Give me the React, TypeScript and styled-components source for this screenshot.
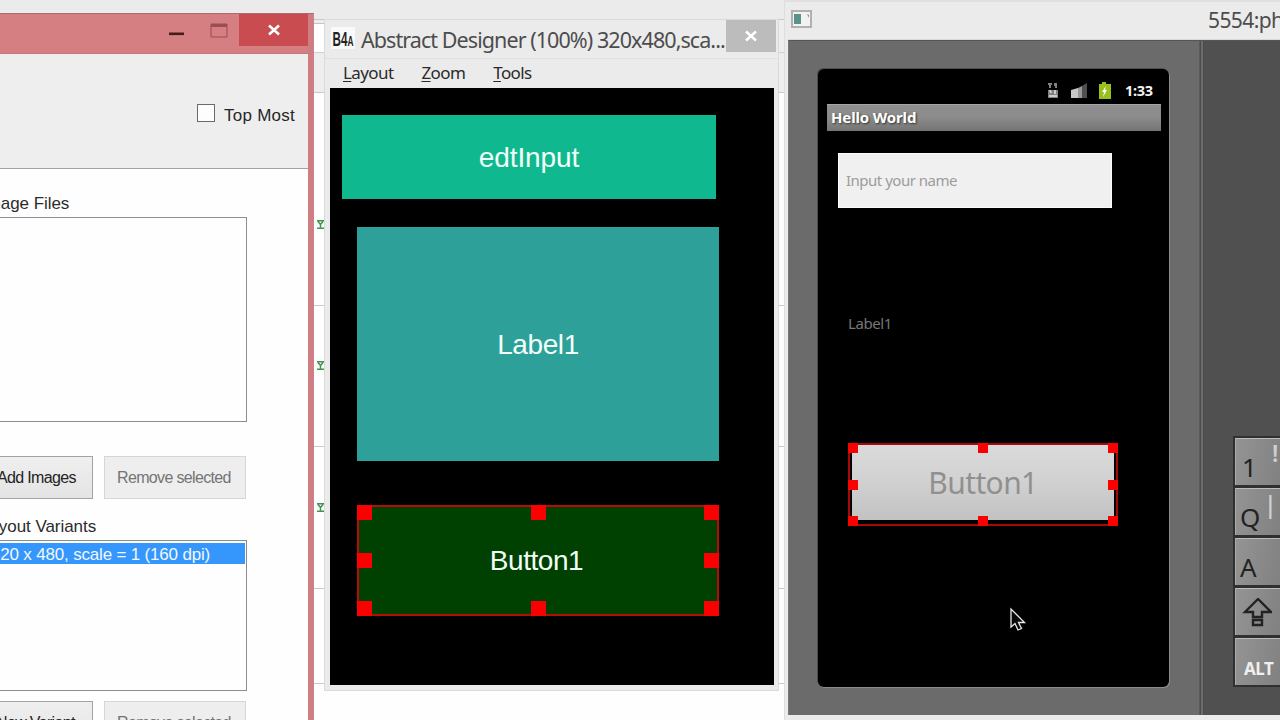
import React from 'react';
import styled, { createGlobalStyle, css } from 'styled-components';

const GlobalStyle = createGlobalStyle`
  * { box-sizing: border-box; }
  body { margin: 0; overflow: hidden; font-family: "Liberation Sans", sans-serif; }
`;

const Desktop = styled.main`
  position: relative;
  width: 1280px;
  height: 720px;
  overflow: hidden;
  background: #fefefe;
`;

/* ---- IDE window in the background ---- */
const Backdrop = styled.div`
  display: flex;
  flex-direction: column;
  height: 720px;
`;
const Band = styled.div<{ $h: number; $bg?: string; $line?: string }>`
  flex: none;
  height: ${p => p.$h}px;
  background: ${p => p.$bg ?? '#fefefe'};
  border-bottom: 1px solid ${p => p.$line ?? '#c9c9c9'};
  display: flex;
  padding-left: 314px;
`;
const Field = styled.div`
  width: 10px;
  margin-top: 3px;
  background: #fff;
  border-top: 1px solid #c4c4c4;
`;
const FoldMark = styled.svg<{ $top: number }>`
  width: 9px;
  height: 9px;
  margin: ${p => p.$top}px 0 0 2px;
`;
const Fold = ({ top }: { top: number }) => (
  <FoldMark $top={top} viewBox="0 0 9 9" fill="none" stroke="#3f9650" strokeWidth="1.5">
    <path d="M1 .8h7M1 8.2h7M2 1.5l2.500 3 2.500-3M4.500 4.500v3.500" />
  </FoldMark>
);

const Window = styled.section<{ $x: number; $y: number; $w: number; $h: number }>`
  position: absolute;
  left: ${p => p.$x}px;
  top: ${p => p.$y}px;
  width: ${p => p.$w}px;
  height: ${p => p.$h}px;
  display: flex;
  flex-direction: column;
`;

/* ---- Designer properties window ---- */
const PropsWindow = styled(Window)`
  background: #cf7d83;
  border-top: 1px solid #ad6a70;
  border-right: 1px solid #c98288;
  padding-right: 5px;
`;
const PropsTitle = styled.header`
  height: 40px;
  flex: none;
  display: flex;
  justify-content: flex-end;
  background: #d67f82;
  border-bottom: 1px solid #bd7b7e;
`;
const Caption = styled.div<{ $w: number; $h: number; $bg?: string }>`
  flex: none;
  width: ${p => p.$w}px;
  height: ${p => p.$h}px;
  background: ${p => p.$bg ?? 'transparent'};
  display: flex;
  align-items: center;
  justify-content: center;
`;
const PropsHeader = styled.div`
  height: 115px;
  flex: none;
  background: #eeeeee;
  border-bottom: 1px solid #a2a2a2;
  display: flex;
  justify-content: flex-end;
  align-items: center;
  padding: 9px 13px 0 0;
`;
const CheckLabel = styled.label`
  display: flex;
  align-items: center;
  gap: 9px;
  font-size: 17px;
  letter-spacing: 0.25px;
  color: #262626;
`;
const CheckBox = styled.span`
  width: 18px;
  height: 18px;
  margin-top: -5px;
  border: 1px solid #6b6b6b;
  background: #fdfdfd;
`;
const PropsBody = styled.div`
  flex: 1;
  background: #fefefe;
  padding: 24px 61px 0 14px;
  overflow: hidden;
`;
const GroupLabel = styled.div<{ $indent: number }>`
  height: 24px;
  line-height: 22px;
  padding-left: ${p => p.$indent}px;
  font-size: 17px;
  letter-spacing: -0.05px;
  color: #2b2b2b;
  white-space: nowrap;
`;
const ListBox = styled.div<{ $h: number }>`
  height: ${p => p.$h}px;
  background: #fefefe;
  border: 1px solid #8b8d93;
  padding: 1px;
`;
const ListItem = styled.div`
  height: 21px;
  margin-top: 1px;
  background: #3597fb;
  color: #f2f8ff;
  font-size: 17px;
  line-height: 24px;
  letter-spacing: -0.18px;
  padding-left: 15px;
  white-space: nowrap;
  overflow: hidden;
`;
const ButtonRow = styled.div<{ $top: number; $bottom: number }>`
  display: flex;
  gap: 11px;
  margin: ${p => p.$top}px 0 ${p => p.$bottom}px 17px;
`;
const PushButton = styled.button<{ $w: number; $pad: number }>`
  width: ${p => p.$w}px;
  height: 43px;
  padding: 1px 0 0 ${p => p.$pad}px;
  text-align: left;
  white-space: nowrap;
  font: 16px "Liberation Sans", sans-serif;
  letter-spacing: -0.65px;
  color: #222;
  background: linear-gradient(#efefef, #e4e4e4);
  border: 1px solid #a3a3a3;
  &:disabled { color: #747474; background: #eeeeee; border-color: #d6d6d6; }
`;

/* ---- Abstract designer window ---- */
const DesignerWindow = styled(Window)`
  background: #ebebeb;
  border: 1px solid #dadada;
`;
const DesignerTitle = styled.header`
  height: 39px;
  flex: none;
  display: flex;
  align-items: flex-start;
  border-bottom: 1px solid #e0e0e0;
  padding-left: 6px;
`;
const TitleText = styled.h1`
  margin: 0;
  width: 371px;
  flex: none;
  font: 400 21.5px/30px "Noto Sans", sans-serif;
  letter-spacing: -0.93px;
  color: #4d4d4d;
  white-space: nowrap;
  padding: 5px 0 0 6px;
`;
const Logo = styled.svg`
  width: 24px;
  height: 24px;
  margin-top: 7px;
  flex: none;
`;
const MenuBar = styled.nav`
  height: 29px;
  flex: none;
  display: flex;
  gap: 28px;
  padding: 1px 0 0 18px;
  font: 17px/26px "Noto Sans", sans-serif;
  letter-spacing: -0.6px;
  color: #2a2a2a;
  u { text-underline-offset: 2px; }
`;
const Canvas = styled.div`
  position: relative;
  flex: none;
  height: 597px;
  margin: 0 4px 0 5px;
  background: #000;
`;
type Box = { $x: number; $y: number; $w: number; $h: number };
const box = css<Box>`
  position: absolute;
  left: ${p => p.$x}px;
  top: ${p => p.$y}px;
  width: ${p => p.$w}px;
  height: ${p => p.$h}px;
`;
const View = styled.div<Box & { $bg: string; $track: number; $selected?: boolean }>`
  ${box}
  display: flex;
  align-items: center;
  justify-content: center;
  background: ${p => p.$bg};
  border: ${p => (p.$selected ? '2px solid #b80d05' : '0')};
  color: #f2fff8;
  font-size: 28px;
  letter-spacing: ${p => p.$track}px;
  padding: ${p => (p.$selected ? '0 3px 0 0' : '1px 0 0')};
`;
const Handle = styled.i<{ $s: number; $l: string; $t: string; $out: number }>`
  position: absolute;
  width: ${p => p.$s}px;
  height: ${p => p.$s}px;
  left: calc(${p => p.$l} * (100% + ${p => 2 * p.$out - p.$s}px) - ${p => p.$out}px);
  top: calc(${p => p.$t} * (100% + ${p => 2 * p.$out - p.$s}px) - ${p => p.$out}px);
  background: #fb0000;
`;
const spots = [['0', '0'], ['.5', '0'], ['1', '0'], ['0', '.5'], ['1', '.5'], ['0', '1'], ['.5', '1'], ['1', '1']];
const Handles = ({ size, out }: { size: number; out: number }) => (
  <>{spots.map(([l, t]) => <Handle key={l + t} $s={size} $l={l} $t={t} $out={out} />)}</>
);

/* ---- Emulator window ---- */
const EmulatorWindow = styled(Window)`
  background: #ebebeb;
  border-top: 2px solid #e0e0e2;
  border-left: 1px solid #dedede;
  padding-left: 3px;
`;
const EmulatorTitle = styled.header`
  height: 38px;
  flex: none;
  display: flex;
  align-items: flex-start;
  justify-content: space-between;
  padding: 7px 0 0 2px;
  border-bottom: 1px solid #d8d8d8;
`;
const EmulatorName = styled.span`
  width: 72px;
  margin-top: -4px;
  font: 21px/30px "Noto Sans", sans-serif;
  letter-spacing: -0.6px;
  color: #4d4d4d;
  white-space: nowrap;
  overflow: hidden;
`;
const EmulatorBody = styled.div`
  height: 675px;
  flex: none;
  display: flex;
  border-top: 1px solid #555;
  border-left: 1px solid #777;
`;
const Bezel = styled.div`
  width: 410px;
  flex: none;
  background: #6b6b6b;
  padding: 28px 0 0 29px;
`;
const Divider = styled.div`
  width: 5px;
  flex: none;
  background: linear-gradient(90deg, #5a5a5a 0 1px, #4b4b4b 1px 2px, #6c6c6c 2px 4px, #4b4b4b 4px);
`;
const Phone = styled.div`
  position: relative;
  width: 351px;
  height: 618px;
  background: #000;
  border-radius: 6px;
  box-shadow: 1px 1px 0 #8c8c8c, -1px -1px 0 #4d4d4d;
  padding: 9px 8px 0 9px;
  font-family: "Noto Sans", sans-serif;
`;
const StatusBar = styled.div`
  height: 26px;
  display: flex;
  align-items: center;
  justify-content: flex-end;
  padding-right: 6px;
`;
const Clock = styled.b`
  width: 30px;
  margin: -2px 0 0 13px;
  font-size: 14.5px;
  letter-spacing: -0.3px;
  color: #f3f3f3;
  white-space: nowrap;
`;
const AppTitle = styled.div`
  height: 27px;
  background: linear-gradient(#8f8f8f, #8b8b8b 50%, #747474);
  border-top: 1px solid #a5a5a5;
  color: #fff;
  font-weight: 700;
  font-size: 15px;
  line-height: 24px;
  letter-spacing: -0.15px;
  padding-left: 4px;
  text-shadow: 1px 1px 2px #333;
`;
const NameInput = styled.div`
  width: 274px;
  height: 55px;
  margin: 22px 0 0 11px;
  background: #f0f0f0;
  border: 1px solid #fbfbfb;
  color: #9c9c9c;
  font-size: 15px;
  line-height: 53px;
  letter-spacing: -0.5px;
  padding-left: 7px;
`;
const PhoneLabel = styled.div`
  margin: 104px 0 0 21px;
  height: 22px;
  font-size: 15px;
  line-height: 22px;
  letter-spacing: -0.4px;
  color: #777;
`;
const Selection = styled.div`
  position: relative;
  width: 270px;
  height: 83px;
  margin: 109px 0 0 21px;
  border: 2px solid #a90808;
  padding: 0 2px 4px 2px;
`;
const PhoneButton = styled.div`
  height: 75px;
  border-radius: 2px;
  background: linear-gradient(#dadada, #d2d2d2 45%, #c2c2c2);
  color: #909090;
  font-size: 30px;
  line-height: 75px;
  text-align: center;
  letter-spacing: -0.6px;
`;
const Cursor = styled.svg`
  position: absolute;
  left: 191px;
  top: 538px;
  width: 20px;
  height: 26px;
`;
const KeyPanel = styled.div`
  flex: 1;
  background: #505050;
  padding: 395px 0 0 29px;
  overflow: hidden;
`;
const Keys = styled.div`
  width: 60px;
  background: #303030;
  padding: 2px 0 2px 2px;
  display: flex;
  flex-direction: column;
  gap: 3px;
`;
const Key = styled.div<{ $light?: boolean; $left?: number }>`
  position: relative;
  height: 47px;
  background: linear-gradient(100deg, #949494, #7c7c7c);
  border-top: 1px solid #bcbcbc;
  border-left: 1px solid #ababab;
  padding: ${p => (p.$light ? 18 : 11)}px 0 0 ${p => p.$left ?? 4}px;
  color: ${p => (p.$light ? '#f0f0f0' : '#222')};
  font: ${p => (p.$light ? '700 17px/23px' : '400 26px/34px')} "Noto Sans", sans-serif;
  letter-spacing: ${p => (p.$light ? '-0.5px' : '0')};
`;
const AltGlyph = styled.span<{ $left: number; $top: number }>`
  position: absolute;
  left: ${p => p.$left}px;
  top: ${p => p.$top}px;
  color: #d0d0d0;
  font-size: 23px;
  font-weight: 600;
  line-height: 34px;
`;
const ShiftIcon = styled.svg`
  display: block;
  width: 32px;
  height: 32px;
  margin-top: -2px;
`;
const CloseX = ({ s }: { s: number }) => (
  <svg width={s} height={s} viewBox="0 0 12 12" stroke="#fff" strokeWidth="2.5">
    <path d="M1 1.5l10 9M11 1.5l-10 9" />
  </svg>
);

export default function App() {
  return (
    <Desktop>
      <GlobalStyle />
      <Backdrop>
        <Band $h={20} $bg="#ebebeb" />
        <Band $h={33} $bg="#eeeeee" $line="#cfcfcf"><Field /></Band>
        <Band $h={40} $bg="#eeeeee" />
        <Band $h={213}><Fold top={127} /></Band>
        <Band $h={141}><Fold top={55} /></Band>
        <Band $h={142}><Fold top={56} /></Band>
        <Band $h={95} />
      </Backdrop>

      <PropsWindow $x={-40} $y={13} $w={354} $h={707}>
        <PropsTitle>
          <Caption $w={44} $h={34}>
            <svg width="16" height="12" viewBox="0 0 16 12"><path d="M1 7.500h15v2.600H1z" fill="#471c1c" /></svg>
          </Caption>
          <Caption $w={41} $h={32}>
            <svg width="18" height="15" viewBox="0 0 18 15" fill="none" stroke="#9a4d52">
              <path d="M1 1h16v13H1z" /><path d="M1 2.500h16" strokeWidth="3" />
            </svg>
          </Caption>
          <Caption $w={69} $h={32} $bg="#c94d50"><CloseX s={12} /></Caption>
        </PropsTitle>
        <PropsHeader>
          <CheckLabel><CheckBox />Top Most</CheckLabel>
        </PropsHeader>
        <PropsBody>
          <GroupLabel $indent={8}>Image Files</GroupLabel>
          <ListBox $h={205} />
          <ButtonRow $top={34} $bottom={17}>
            <PushButton $w={102} $pad={5}>Add Images</PushButton>
            <PushButton $w={142} $pad={12} disabled>Remove selected</PushButton>
          </ButtonRow>
          <GroupLabel $indent={6}>Layout Variants</GroupLabel>
          <ListBox $h={151}>
            <ListItem>320 x 480, scale = 1 (160 dpi)</ListItem>
          </ListBox>
          <ButtonRow $top={10} $bottom={0}>
            <PushButton $w={102} $pad={4}>New Variant</PushButton>
            <PushButton $w={142} $pad={12} disabled>Remove selected</PushButton>
          </ButtonRow>
        </PropsBody>
      </PropsWindow>

      <DesignerWindow $x={324} $y={19} $w={455} $h={672}>
        <DesignerTitle>
          <Logo viewBox="0 0 24 24">
            <rect width="24" height="22" fill="#fafafa" />
            <text x="1.5" y="19" fontFamily="Liberation Sans" fontWeight="700" textLength="21" lengthAdjust="spacingAndGlyphs" fill="#222">
              <tspan fontSize="21">B4</tspan><tspan fontSize="15">A</tspan>
            </text>
          </Logo>
          <TitleText>Abstract Designer (100%) 320x480,sca...</TitleText>
          <Caption $w={50} $h={32} $bg="#bcbcbc"><CloseX s={12} /></Caption>
        </DesignerTitle>
        <MenuBar>
          <span><u>L</u>ayout</span><span><u>Z</u>oom</span><span><u>T</u>ools</span>
        </MenuBar>
        <Canvas>
          <View $x={12} $y={27} $w={374} $h={84} $bg="#10b890" $track={-0.1}>edtInput</View>
          <View $x={27} $y={139} $w={362} $h={234} $bg="#2ca099" $track={-0.4}>Label1</View>
          <View $x={27} $y={417} $w={362} $h={111} $bg="#004000" $track={-0.45} $selected>
            Button1<Handles size={15} out={2} />
          </View>
        </Canvas>
      </DesignerWindow>

      <EmulatorWindow $x={784} $y={0} $w={496} $h={720}>
        <EmulatorTitle>
          <svg width="22" height="20" viewBox="0 0 22 20">
            <path d="M2 2h19v16H2z" fill="#f2f2f2" stroke="#b1b1b3" strokeWidth="2" />
            <path d="M4 5h7v10H4z" fill="#5c9389" /><path d="M17 5l2 1v3l-1-2z" fill="#888" />
          </svg>
          <EmulatorName>5554:phone</EmulatorName>
        </EmulatorTitle>
        <EmulatorBody>
          <Bezel>
            <Phone>
              <StatusBar>
                <svg width="66" height="18" viewBox="0 0 66 18">
                  <path d="M2 1h4v2H5v3H3V3H2zM8 1h3v5H9V4H8zM2 8h10v8H2z" fill="#808080" />
                  <path d="M4 8l1 3M9 8v4M3 14h8" stroke="#ccc" strokeWidth="2" />
                  <path d="M25 8l7-2v10h-7z" fill="#c8c8c8" /><path d="M32 6l4-2v12h-4z" fill="#999" /><path d="M36 4l5-3v15h-5z" fill="#505050" />
                  <path d="M53 2h3V0h4v2h5v15H53z" fill="#98c01c" />
                  <path d="M60 4l-4 6h2l-1 5 4-7h-2z" fill="#fff" />
                </svg>
                <Clock>1:33</Clock>
              </StatusBar>
              <AppTitle>Hello World</AppTitle>
              <NameInput>Input your name</NameInput>
              <PhoneLabel>Label1</PhoneLabel>
              <Selection>
                <PhoneButton>Button1</PhoneButton>
                <Handles size={10} out={2} />
              </Selection>
              <Cursor viewBox="0 0 20 26">
                <path d="M2 2v18l4-3.500 3 6.500 3.500-1.500-3-6h6z" fill="#080808" stroke="#e8e8e8" strokeWidth="1.300" />
              </Cursor>
            </Phone>
          </Bezel>
          <Divider />
          <KeyPanel>
            <Keys>
              <Key $left={6}>1<AltGlyph $left={36} $top={-3}>!</AltGlyph></Key>
              <Key>Q<AltGlyph $left={28} $top={-2}>|</AltGlyph></Key>
              <Key>A</Key>
              <Key>
                <ShiftIcon viewBox="0 0 32 32" fill="none" stroke="#222" strokeWidth="2.4">
                  <path d="M18 1L5 14h8v5h9v-5h9zM13 22h9v5h-9z" />
                </ShiftIcon>
              </Key>
              <Key $light $left={8}>ALT</Key>
            </Keys>
          </KeyPanel>
        </EmulatorBody>
      </EmulatorWindow>
    </Desktop>
  );
}
